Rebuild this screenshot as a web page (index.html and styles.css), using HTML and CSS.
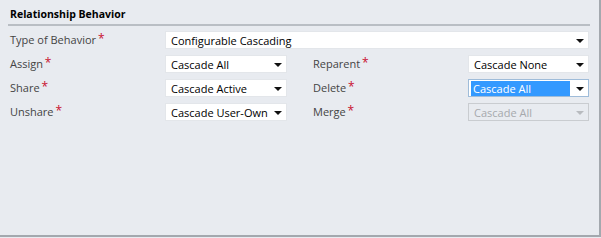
FILE: index.html
```html
<!DOCTYPE html>
<html lang="en">
<head>
  <meta charset="UTF-8" />
  <title>Relationship Behavior</title>
  <link rel="stylesheet" href="styles.css">
</head>
<body>
  <div class="panel">
    <div class="section-title">Relationship Behavior</div>

    <div class="form-grid">
      <!-- Type of behavior spans the full row -->
      <div class="field-label">Type of Behavior <span class="req">*</span></div>
      <div class="dropdown wide">
        <span class="dd-text">Configurable Cascading</span>
        <span class="dd-arrow"></span>
      </div>

      <div class="field-label">Assign <span class="req">*</span></div>
      <div class="dropdown">
        <span class="dd-text">Cascade All</span>
        <span class="dd-arrow"></span>
      </div>
      <div class="field-label right">Reparent <span class="req">*</span></div>
      <div class="dropdown">
        <span class="dd-text">Cascade None</span>
        <span class="dd-arrow"></span>
      </div>

      <div class="field-label">Share <span class="req">*</span></div>
      <div class="dropdown">
        <span class="dd-text">Cascade Active</span>
        <span class="dd-arrow"></span>
      </div>
      <div class="field-label right">Delete <span class="req">*</span></div>
      <div class="dropdown focused">
        <span class="dd-text"><span class="selected">Cascade All</span></span>
        <span class="dd-arrow"></span>
      </div>

      <div class="field-label">Unshare <span class="req">*</span></div>
      <div class="dropdown">
        <span class="dd-text">Cascade User-Own</span>
        <span class="dd-arrow"></span>
      </div>
      <div class="field-label right">Merge <span class="req">*</span></div>
      <div class="dropdown disabled">
        <span class="dd-text">Cascade All</span>
        <span class="dd-arrow"></span>
      </div>
    </div>
  </div>
</body>
</html>
```

FILE: styles.css
```css
html, body {
  margin: 0;
  padding: 0;
  background: #e8ebf0;
}
body {
  font-family: "Open Sans", "Segoe UI", sans-serif;
  font-size: 11px;
  color: #444;
}
.panel {
  width: 599px;
  height: 235px;
  border-right: 2px solid #a3a8ae;
  border-bottom: 2px solid #a3a8ae;
}
.section-title {
  margin: 0 10px 0 8px;
  padding: 7px 0 3px 2px;
  width: 580px;
  font-weight: 700;
  font-size: 10.5px;
  color: #000;
  border-bottom: 2px solid #b9bec4;
}
.form-grid {
  display: grid;
  grid-template-columns: 155px 122px 26px 155px 121px;
  row-gap: 6px;
  margin: 5px 0 0 10px;
  align-items: center;
}
.field-label {
  white-space: nowrap;
  line-height: 18px;
}
.field-label.right {
  grid-column: 4;
}
.req {
  position: relative;
  top: -1px;
  margin-left: -1px;
  color: #c8102e;
  font-size: 12px;
}
.dropdown {
  display: flex;
  align-items: center;
  height: 18px;
  padding-left: 5px;
  background: #fff;
  border: 1px solid #e3e6ea;
  box-sizing: border-box;
  color: #000;
}
.dropdown.wide {
  grid-column: 2 / 6;
}
.dd-text {
  flex: 1;
  min-width: 0;
  white-space: nowrap;
  overflow: hidden;
}
.dd-arrow {
  flex: none;
  width: 0;
  height: 0;
  margin: 1px 4px 0 4px;
  border-left: 4px solid transparent;
  border-right: 4px solid transparent;
  border-top: 4px solid #111;
}
.dropdown.focused {
  padding-left: 2px;
  border: 1px solid #9fbcd9;
}
.dropdown.focused .selected {
  display: block;
  width: 97px;
  padding-left: 2px;
  background: #3399ff;
  color: #fff;
}
.dropdown.disabled {
  background: transparent;
  border: 1px solid #c9ccd0;
  color: #a6a9ad;
}
.dropdown.disabled .dd-arrow {
  border-top-color: #b8bbbf;
}
```
